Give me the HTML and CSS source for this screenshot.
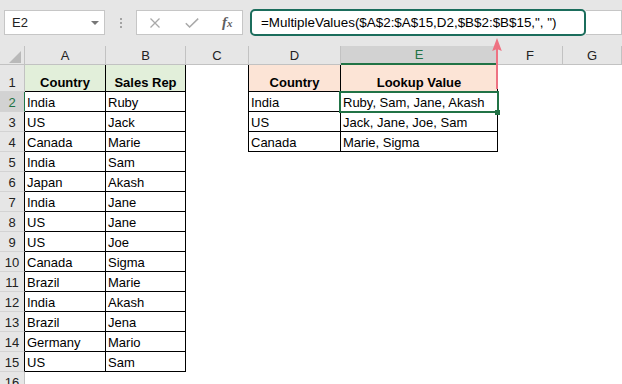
FILE: index.html
```html
<!DOCTYPE html>
<html lang="en">
<head>
    <meta charset="UTF-8">
    <title>MultipleValues lookup</title>
    <link rel="stylesheet" href="styles.css">
</head>
<body>
<div class="window">
    <div class="topbar">
        <div class="namebox">
            <span>E2</span>
            <span class="drop"></span>
        </div>
        <div class="dots"><i></i><i></i><i></i></div>
        <div class="fbtns">
            <svg class="ico-x" width="10" height="10" viewBox="0 0 10 10"><path d="M0.5 0.5L9.5 9.5M9.5 0.5L0.5 9.5" stroke="#a9a9a9" stroke-width="1.3" fill="none"/></svg>
            <svg class="ico-ok" width="14" height="10" viewBox="0 0 14 10"><path d="M0.8 5.2L4.6 9L13.2 0.6" stroke="#a9a9a9" stroke-width="1.5" fill="none"/></svg>
            <span class="fx">f<small>x</small></span>
        </div>
        <div class="formula">=MultipleValues($A$2:$A$15,D2,$B$2:$B$15,", ")</div>
        <div class="formula-rest"></div>
    </div>

    <div class="sheet">
        <div class="ch corner"><svg width="24" height="18" viewBox="0 0 24 18"><path d="M21 5L21 17L9 17Z" fill="#b9b9b9"/></svg></div>
        <div class="ch">A</div><div class="ch">B</div><div class="ch">C</div><div class="ch">D</div><div class="ch sel-col">E</div><div class="ch">F</div><div class="ch">G</div>

        <div class="rh">1</div><div class="c t hg">Country</div><div class="c t hg">Sales Rep</div><div class="c lb"></div><div class="c t hp">Country</div><div class="c t hp">Lookup Value</div><div class="c"></div><div class="c"></div>
        <div class="rh sel-row">2</div><div class="c t">India</div><div class="c t">Ruby</div><div class="c lb"></div><div class="c t">India</div><div class="c t">Ruby, Sam, Jane, Akash</div><div class="c"></div><div class="c"></div>
        <div class="rh lb">3</div><div class="c t">US</div><div class="c t">Jack</div><div class="c lb"></div><div class="c t">US</div><div class="c t">Jack, Jane, Joe, Sam</div><div class="c"></div><div class="c"></div>
        <div class="rh lb">4</div><div class="c t">Canada</div><div class="c t">Marie</div><div class="c lb"></div><div class="c t">Canada</div><div class="c t">Marie, Sigma</div><div class="c"></div><div class="c"></div>
        <div class="rh lb">5</div><div class="c t">India</div><div class="c t">Sam</div><div class="c"></div><div class="c"></div><div class="c"></div><div class="c"></div><div class="c"></div>
        <div class="rh lb">6</div><div class="c t">Japan</div><div class="c t">Akash</div><div class="c"></div><div class="c"></div><div class="c"></div><div class="c"></div><div class="c"></div>
        <div class="rh lb">7</div><div class="c t">India</div><div class="c t">Jane</div><div class="c"></div><div class="c"></div><div class="c"></div><div class="c"></div><div class="c"></div>
        <div class="rh lb">8</div><div class="c t">US</div><div class="c t">Jane</div><div class="c"></div><div class="c"></div><div class="c"></div><div class="c"></div><div class="c"></div>
        <div class="rh lb">9</div><div class="c t">US</div><div class="c t">Joe</div><div class="c"></div><div class="c"></div><div class="c"></div><div class="c"></div><div class="c"></div>
        <div class="rh lb">10</div><div class="c t">Canada</div><div class="c t">Sigma</div><div class="c"></div><div class="c"></div><div class="c"></div><div class="c"></div><div class="c"></div>
        <div class="rh lb">11</div><div class="c t">Brazil</div><div class="c t">Marie</div><div class="c"></div><div class="c"></div><div class="c"></div><div class="c"></div><div class="c"></div>
        <div class="rh lb">12</div><div class="c t">India</div><div class="c t">Akash</div><div class="c"></div><div class="c"></div><div class="c"></div><div class="c"></div><div class="c"></div>
        <div class="rh lb">13</div><div class="c t">Brazil</div><div class="c t">Jena</div><div class="c"></div><div class="c"></div><div class="c"></div><div class="c"></div><div class="c"></div>
        <div class="rh lb">14</div><div class="c t">Germany</div><div class="c t">Mario</div><div class="c"></div><div class="c"></div><div class="c"></div><div class="c"></div><div class="c"></div>
        <div class="rh lb">15</div><div class="c t">US</div><div class="c t">Sam</div><div class="c"></div><div class="c"></div><div class="c"></div><div class="c"></div><div class="c"></div>
        <div class="rh">16</div><div class="c"></div><div class="c"></div><div class="c"></div><div class="c"></div><div class="c"></div><div class="c"></div><div class="c"></div>

        <!-- active cell E2 -->
        <div class="active"><span class="handle"></span></div>
    </div>

    <!-- callout arrow from formula bar to the active cell -->
    <svg class="arrow" width="12" height="54" viewBox="0 0 12 54">
        <path d="M6 10L6 52" stroke="#ee7282" stroke-width="2" fill="none"/>
        <path d="M6 1L1.2 14L6 12L10.8 14Z" fill="#ee7282"/>
    </svg>
</div>
</body>
</html>
```

FILE: styles.css
```css
* {
    box-sizing: border-box;
}
body {
    margin: 0;
    background: #fff;
    font-family: "Liberation Sans", Arial, sans-serif;
    font-size: 13px;
    color: #000;
}
.window {
    position: relative;
    width: 622px;
    height: 384px;
    overflow: hidden;
}

/* name box + formula bar */
.topbar {
    display: flex;
    align-items: flex-start;
    height: 46px;
    padding-left: 4px;
    background: #e6e6e6;
}
.namebox {
    display: flex;
    align-items: center;
    justify-content: space-between;
    width: 101px;
    height: 25px;
    margin-top: 10px;
    padding: 0 5px 0 7px;
    background: #fff;
    border: 1px solid #c6c6c6;
    font-size: 13px;
    color: #222;
}
.drop {
    width: 0;
    height: 0;
    border-left: 4px solid transparent;
    border-right: 4px solid transparent;
    border-top: 4px solid #777;
}
.dots {
    display: flex;
    flex-direction: column;
    gap: 2px;
    margin: 18px 14px 0 15px;
}
.dots i {
    display: block;
    width: 2px;
    height: 2px;
    background: #a3a3a3;
}
.fbtns {
    display: flex;
    align-items: center;
    width: 107px;
    height: 25px;
    margin-top: 10px;
    padding-left: 13px;
    background: #fff;
    border: 1px solid #c6c6c6;
}
.ico-ok {
    margin-left: 25px;
}
.fx {
    margin-left: 23px;
    font-family: "Liberation Serif", serif;
    font-style: italic;
    font-weight: bold;
    font-size: 15px;
    color: #5f5f5f;
}
.fx small {
    font-size: 11px;
}
.formula {
    display: flex;
    align-items: center;
    width: 336px;
    height: 27px;
    margin: 9px 0 0 7px;
    padding-left: 9px;
    background: #fff;
    border: 2px solid #1b6d5c;
    border-radius: 5px;
    font-size: 13.4px;
    white-space: nowrap;
}
.formula-rest {
    flex: 1;
    height: 25px;
    margin-top: 10px;
    background: #fff;
    border: 1px solid #c6c6c6;
    border-left: none;
}

/* worksheet grid */
.sheet {
    position: relative;
    display: grid;
    grid-template-columns: 25px 81px 80px 63px 92px 157px 65px 1fr;
    grid-template-rows: 19px 27px repeat(15, 20px) 20px;
}
.ch, .rh {
    display: flex;
    align-items: flex-end;
    justify-content: center;
    line-height: 16px;
    background: #e6e6e6;
    color: #222;
}
.ch {
    border-right: 1px solid #c2c2c2;
    border-bottom: 1px solid #c2c2c2;
}
.rh {
    border-right: 1px solid #c2c2c2;
    border-bottom: 1px solid #d3d3d3;
}
.corner {
    padding: 0;
}
.sel-col {
    background: #d2d2d2;
    color: #217346;
    border-bottom: 2px solid #217346;
}
.sel-row {
    background: #d2d2d2;
    color: #217346;
    border-right: 1px solid #217346;
}
.c {
    display: flex;
    align-items: flex-end;
    padding: 0 2px;
    line-height: 16px;
    white-space: nowrap;
    overflow: hidden;
}
.t {
    border-right: 1px solid #000;
    border-bottom: 1px solid #000;
}
.lb {
    border-right: 1px solid #000;
}
.hg, .hp {
    justify-content: center;
    font-weight: bold;
}
.hg {
    background: #e2efda;
}
.hp {
    background: #fce4d6;
}

/* overlays */
.active {
    position: absolute;
    left: 339px;
    top: 45px;
    width: 160px;
    height: 22px;
    border: 2px solid #217346;
}
.handle {
    position: absolute;
    right: -3px;
    bottom: -4px;
    width: 5px;
    height: 5px;
    background: #217346;
}
.arrow {
    position: absolute;
    left: 491px;
    top: 37px;
}
```
